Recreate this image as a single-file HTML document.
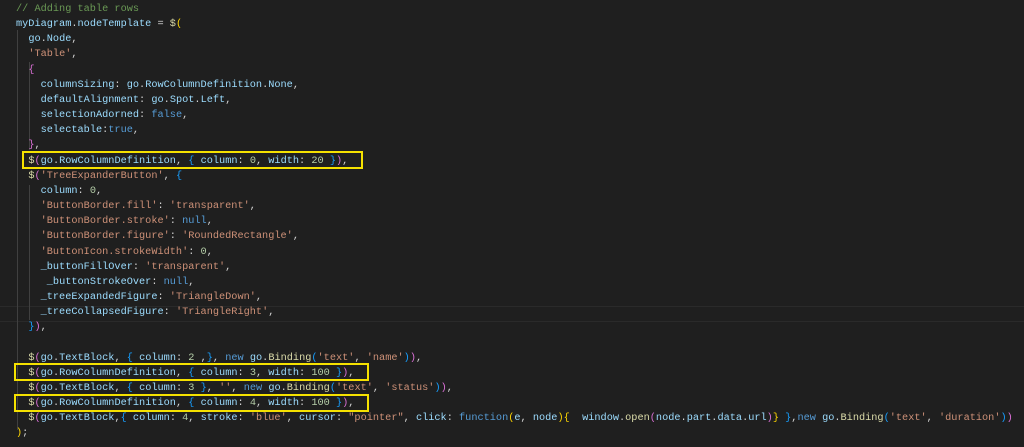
<!DOCTYPE html>
<html><head><style>
body{margin:0;background:#1f1f1f;width:1024px;height:447px;overflow:hidden;position:relative}
pre{margin:0;position:absolute;left:16px;top:2px;font-family:"Liberation Mono",monospace;font-size:10.25px;line-height:15.15px;color:#d4d4d4}
.v{color:#9cdcfe}.s{color:#ce9178}.k{color:#569cd6}.f{color:#dcdcaa}.c{color:#6a9955}.y{color:#ffd700}.p{color:#da70d6}.b{color:#179fff}.n{color:#b5cea8}
.box{position:absolute;border:2px solid #f5e100;box-sizing:border-box}
.g{position:absolute;width:1px;background:#404040}
.hl{position:absolute;left:0;width:1024px;height:14px;top:306px;border-top:1px solid #2a2a2a;border-bottom:1px solid #2a2a2a}
</style></head><body>
<div class="hl"></div>
<div class="g" style="left:17px;top:30px;height:400px"></div>
<div class="g" style="left:29px;top:62px;height:88px"></div>
<div class="g" style="left:29px;top:185px;height:135px"></div>
<pre><span class="c">// Adding table rows</span>
<span class="v">myDiagram</span>.<span class="v">nodeTemplate</span> = <span class="f">$</span><span class="y">(</span>
  <span class="v">go</span>.<span class="v">Node</span>,
  <span class="s">'Table'</span>,
  <span class="p">{</span>
    <span class="v">columnSizing</span>: <span class="v">go</span>.<span class="v">RowColumnDefinition</span>.<span class="v">None</span>,
    <span class="v">defaultAlignment</span>: <span class="v">go</span>.<span class="v">Spot</span>.<span class="v">Left</span>,
    <span class="v">selectionAdorned</span>: <span class="k">false</span>,
    <span class="v">selectable</span>:<span class="k">true</span>,
  <span class="p">}</span>,
  <span class="f">$</span><span class="p">(</span><span class="v">go</span>.<span class="v">RowColumnDefinition</span>, <span class="b">{</span> <span class="v">column</span>: <span class="n">0</span>, <span class="v">width</span>: <span class="n">20</span> <span class="b">}</span><span class="p">)</span>,
  <span class="f">$</span><span class="p">(</span><span class="s">'TreeExpanderButton'</span>, <span class="b">{</span>
    <span class="v">column</span>: <span class="n">0</span>,
    <span class="s">'ButtonBorder.fill'</span>: <span class="s">'transparent'</span>,
    <span class="s">'ButtonBorder.stroke'</span>: <span class="k">null</span>,
    <span class="s">'ButtonBorder.figure'</span>: <span class="s">'RoundedRectangle'</span>,
    <span class="s">'ButtonIcon.strokeWidth'</span>: <span class="n">0</span>,
    <span class="v">_buttonFillOver</span>: <span class="s">'transparent'</span>,
     <span class="v">_buttonStrokeOver</span>: <span class="k">null</span>,
    <span class="v">_treeExpandedFigure</span>: <span class="s">'TriangleDown'</span>,
    <span class="v">_treeCollapsedFigure</span>: <span class="s">'TriangleRight'</span>,
  <span class="b">}</span><span class="p">)</span>,

  <span class="f">$</span><span class="p">(</span><span class="v">go</span>.<span class="v">TextBlock</span>, <span class="b">{</span> <span class="v">column</span>: <span class="n">2</span> ,<span class="b">}</span>, <span class="k">new</span> <span class="v">go</span>.<span class="f">Binding</span><span class="b">(</span><span class="s">'text'</span>, <span class="s">'name'</span><span class="b">)</span><span class="p">)</span>,
  <span class="f">$</span><span class="p">(</span><span class="v">go</span>.<span class="v">RowColumnDefinition</span>, <span class="b">{</span> <span class="v">column</span>: <span class="n">3</span>, <span class="v">width</span>: <span class="n">100</span> <span class="b">}</span><span class="p">)</span>,
  <span class="f">$</span><span class="p">(</span><span class="v">go</span>.<span class="v">TextBlock</span>, <span class="b">{</span> <span class="v">column</span>: <span class="n">3</span> <span class="b">}</span>, <span class="s">''</span>, <span class="k">new</span> <span class="v">go</span>.<span class="f">Binding</span><span class="b">(</span><span class="s">'text'</span>, <span class="s">'status'</span><span class="b">)</span><span class="p">)</span>,
  <span class="f">$</span><span class="p">(</span><span class="v">go</span>.<span class="v">RowColumnDefinition</span>, <span class="b">{</span> <span class="v">column</span>: <span class="n">4</span>, <span class="v">width</span>: <span class="n">100</span> <span class="b">}</span><span class="p">)</span>,
  <span class="f">$</span><span class="p">(</span><span class="v">go</span>.<span class="v">TextBlock</span>,<span class="b">{</span> <span class="v">column</span>: <span class="n">4</span>, <span class="v">stroke</span>: <span class="s">'blue'</span>, <span class="v">cursor</span>: <span class="s">"pointer"</span>, <span class="v">click</span>: <span class="k">function</span><span class="y">(</span><span class="v">e</span>, <span class="v">node</span><span class="y">){</span>  <span class="v">window</span>.<span class="f">open</span><span class="p">(</span><span class="v">node</span>.<span class="v">part</span>.<span class="v">data</span>.<span class="v">url</span><span class="p">)</span><span class="y">}</span> <span class="b">}</span>,<span class="k">new</span> <span class="v">go</span>.<span class="f">Binding</span><span class="b">(</span><span class="s">'text'</span>, <span class="s">'duration'</span><span class="b">)</span><span class="p">)</span>
<span class="y">)</span>;</pre>
<div class="box" style="left:22px;top:151px;width:341px;height:18px"></div>
<div class="box" style="left:14px;top:363px;width:355px;height:18px"></div>
<div class="box" style="left:14px;top:394px;width:355px;height:18px"></div>
</body></html>
